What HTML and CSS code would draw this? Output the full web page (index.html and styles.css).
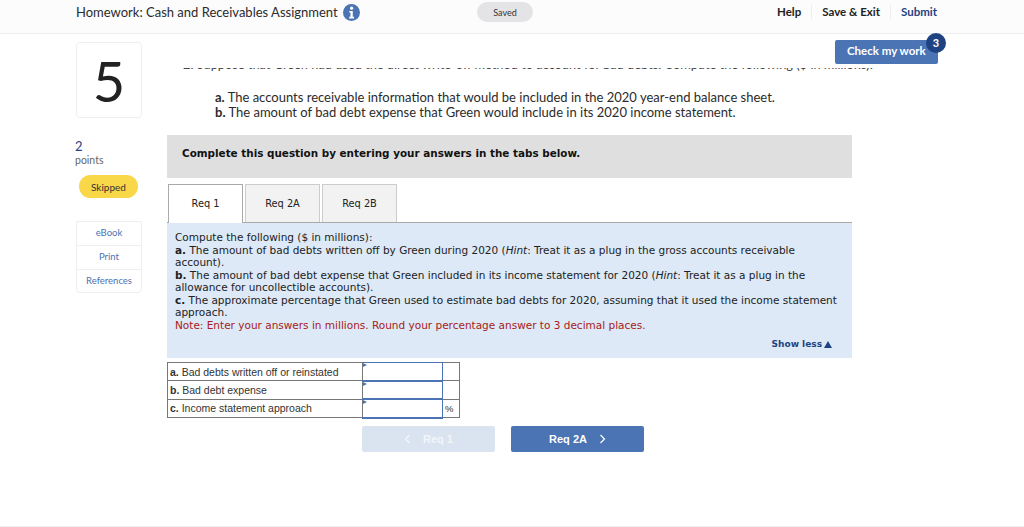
FILE: index.html
```html
<!DOCTYPE html>
<html lang="en">
<head>
<meta charset="utf-8">
<title>Homework: Cash and Receivables Assignment</title>
<link rel="stylesheet" href="styles.css">
</head>
<body>
<header class="topbar">
  <div class="topbar-title">
    <span class="title-text">Homework: Cash and Receivables Assignment</span>
    <svg class="info-icon" viewBox="0 0 16 16" width="17" height="17" aria-hidden="true">
      <circle cx="8" cy="8" r="8" fill="#4a74b4"/>
      <circle cx="8.1" cy="3.9" r="1.5" fill="#fff"/>
      <path d="M5.9 6.5h3.3v5.6h1.2v1.5H5.8v-1.5h1.2V8H5.9z" fill="#fff"/>
    </svg>
  </div>
  <div class="saved-pill">Saved</div>
  <nav class="topnav">
    <span class="nav-item">Help</span>
    <span class="nav-item">Save &amp; Exit</span>
    <span class="nav-item nav-submit">Submit</span>
  </nav>
</header>

<div class="check-wrap">
  <span class="check-btn">Check my work</span>
  <span class="check-badge">3</span>
</div>

<main class="layout">
  <aside class="side">
    <div class="qnum">5</div>
    <div class="pts-num">2</div>
    <div class="pts-label">points</div>
    <div class="skipped">Skipped</div>
    <ul class="side-links">
      <li>eBook</li>
      <li>Print</li>
      <li>References</li>
    </ul>
  </aside>

  <section class="content">
    <div class="clip"><p class="clip-line">2. Suppose that Green had used the direct write-off method to account for bad debts. Compute the following ($ in millions):</p></div>
    <ol class="parts">
      <li><b>a.</b> The accounts receivable information that would be included in the 2020 year-end balance sheet.</li>
      <li><b>b.</b> The amount of bad debt expense that Green would include in its 2020 income statement.</li>
    </ol>
    <div class="instruction">Complete this question by entering your answers in the tabs below.</div>
    <div class="tabs">
      <div class="tab tab-active">Req 1</div>
      <div class="tab">Req 2A</div>
      <div class="tab">Req 2B</div>
    </div>
    <div class="panel">
      <div>Compute the following ($ in millions):</div>
      <div><b>a.</b> The amount of bad debts written off by Green during 2020 (<i>Hint</i>: Treat it as a plug in the gross accounts receivable account).</div>
      <div><b>b.</b> The amount of bad debt expense that Green included in its income statement for 2020 (<i>Hint</i>: Treat it as a plug in the allowance for uncollectible accounts).</div>
      <div><b>c.</b> The approximate percentage that Green used to estimate bad debts for 2020, assuming that it used the income statement approach.</div>
      <div class="note">Note: Enter your answers in millions. Round your percentage answer to 3 decimal places.</div>
      <div class="show-less">Show less<svg class="tri" viewBox="0 0 8 7" width="8" height="7" aria-hidden="true"><path d="M4 0l4 7H0z" fill="#1f4382"/></svg></div>
    </div>
    <table class="answers">
      <tr><td class="lbl"><b>a.</b> Bad debts written off or reinstated</td><td class="inp"></td><td class="unit"></td></tr>
      <tr><td class="lbl"><b>b.</b> Bad debt expense</td><td class="inp"></td><td class="unit"></td></tr>
      <tr><td class="lbl"><b>c.</b> Income statement approach</td><td class="inp"></td><td class="unit">%</td></tr>
    </table>
    <div class="pager">
      <div class="pg-btn pg-prev"><svg class="chev" viewBox="0 0 7 10" width="7" height="10" aria-hidden="true"><path d="M5.5 1L1.5 5l4 4" fill="none" stroke="#f2f5f9" stroke-width="1.2"/></svg>Req 1</div>
      <div class="pg-btn pg-next">Req 2A<svg class="chev chev-r" viewBox="0 0 7 10" width="7" height="10" aria-hidden="true"><path d="M1.5 1l4 4-4 4" fill="none" stroke="#fff" stroke-width="1.2"/></svg></div>
    </div>
  </section>
</main>
<div class="bottom-line"></div>
</body>
</html>
```
FILE: styles.css
```css
* { box-sizing: border-box; }
html, body { margin: 0; padding: 0; }
body {
  width: 1024px;
  height: 527px;
  overflow: hidden;
  position: relative;
  background: #fff;
  font-family: "DejaVu Sans", Verdana, sans-serif;
  color: #222;
}
.topbar {
  height: 34px;
  background: #fcfcfc;
  border-bottom: 1px solid #ececec;
  display: flex;
  align-items: center;
  padding: 0 87px 9px 76px;
  font-family: Lato, "Noto Sans", sans-serif;
}
.topbar-title { display: flex; align-items: center; gap: 5px; width: 400px; }
.title-text { font-size: 13px; color: #2b2b2b; white-space: nowrap; }
.info-icon { flex: none; }
.saved-pill {
  width: 56px;
  height: 20px;
  border-radius: 10px;
  background: #e4e4e6;
  font-size: 9px;
  color: #333;
  display: flex;
  align-items: center;
  justify-content: center;
  margin-left: 1px;
}
.topnav { margin-left: auto; display: flex; align-items: center; }
.nav-item {
  font-size: 11.5px;
  font-weight: 700;
  color: #222;
  padding: 0 10px;
  border-right: 1px solid #eee;
  line-height: 16px;
}
.nav-submit { color: #1f4382; border-right: 0; padding-right: 0; }
.check-wrap { position: absolute; left: 835px; top: 40px; width: 103px; height: 24px; z-index: 2; }
.check-btn {
  display: flex;
  width: 103px;
  height: 24px;
  align-items: center;
  padding: 0 0 3px 12px;
  background: #4a74b4;
  border-radius: 2px;
  color: #fff;
  font: 700 11.5px Lato, "Noto Sans", sans-serif;
}
.check-badge {
  position: absolute;
  left: 91px;
  top: -7px;
  width: 20px;
  height: 20px;
  border-radius: 50%;
  background: #1f4382;
  color: #fff;
  font: 700 11px/19px Lato, "Noto Sans", sans-serif;
  text-align: center;
}
.layout { display: flex; padding-left: 75px; gap: 25px; }
.side { width: 67px; flex: none; font-family: Lato, "Noto Sans", sans-serif; padding-top: 8px; }
.qnum {
  width: 66px;
  height: 76px;
  margin-left: 1px;
  border: 1px solid #eee;
  border-radius: 4px;
  display: flex;
  align-items: center;
  justify-content: center;
  font-size: 56px;
  color: #222;
}
.pts-num { margin-top: 20px; font-size: 13px; line-height: 16px; color: #1f4382; }
.pts-label { font-size: 10.5px; line-height: 13px; color: #666; }
.skipped {
  width: 59px;
  height: 23px;
  margin: 8px 0 0 4px;
  border-radius: 12px;
  background: #f8d748;
  font-size: 10px;
  color: #333;
  display: flex;
  align-items: center;
  justify-content: center;
}
.side-links {
  list-style: none;
  margin: 23px 0 0 1px;
  padding: 0;
  width: 66px;
  border: 1px solid #eee;
  border-radius: 0 0 4px 4px;
  font-size: 9.5px;
  color: #4a74b4;
  text-align: center;
}
.side-links li { height: 24px; line-height: 22px; border-bottom: 1px solid #eee; }
.side-links li:last-child { height: 22px; border-bottom: 0; }
.content { width: 685px; flex: none; }
.clip { height: 4px; width: 720px; margin-top: 34px; overflow: hidden; padding-left: 16px; font-family: Lato, "Noto Sans", sans-serif; }
.clip-line { margin: -12px 0 0; font-size: 12.8px; line-height: 16px; white-space: nowrap; color: #444; }
.parts { list-style: none; margin: 18px 0 0; padding: 0 0 0 48px; font: 13px/15px Lato, "Noto Sans", sans-serif; color: #2b2b2b; }
.instruction {
  height: 43px;
  margin-top: 15px;
  background: #dfdfdf;
  padding: 11px 0 0 15px;
  font-size: 10.4px;
  font-weight: 700;
  line-height: 14px;
  color: #111;
}
.tabs { display: flex; gap: 2px; padding-left: 1px; margin-top: 6px; border-bottom: 1px solid #aaa; height: 39px; }
.tab {
  width: 75px;
  height: 38px;
  background: #f2f2f2;
  border: 1px solid #ccc;
  border-bottom: 0;
  font-size: 9.8px;
  line-height: 37px;
  text-align: center;
  color: #222;
}
.tab-active { background: #fff; border-color: #aaa; height: 39px; }
.panel {
  background: #dde9f7;
  height: 135px;
  padding: 8px 8px 0;
  font-size: 10.5px;
  line-height: 12.5px;
  color: #222;
}
.note { color: #a82020; }
.show-less {
  margin-top: 7px;
  display: flex;
  justify-content: flex-end;
  align-items: center;
  gap: 2px;
  padding-right: 12px;
  font: 700 9px/13px "DejaVu Sans", sans-serif;
  color: #1f4382;
}
.answers {
  border-collapse: collapse;
  margin-top: 4px;
  width: 293px;
  font: 10.5px "Liberation Sans", Arial, sans-serif;
  color: #333;
}
.answers td { border: 1px solid #777; height: 18.4px; padding: 0 0 0 2px; }
.lbl { width: 196px; }
.inp { width: 80px; position: relative; border: 1px solid #4a74b4 !important; border-width: 1px 1px 2px 1px !important; }
.inp::before {
  content: "";
  position: absolute;
  left: 0;
  top: 0;
  border-left: 4px solid #4a74b4;
  border-top: 2.5px solid transparent;
  border-bottom: 2.5px solid transparent;
}
.unit { width: 17px; font-size: 9.5px; }
.pager { display: flex; gap: 16px; margin-top: 7px; margin-left: 195px; font: 700 11px "Liberation Sans", Arial, sans-serif; }
.pg-btn {
  width: 133px;
  height: 26px;
  border-radius: 2px;
  display: flex;
  align-items: center;
  justify-content: center;
  color: #fff;
}
.pg-prev { background: #dae4f0; color: #f2f5f9; }
.pg-next { background: #4a74b4; }
.chev { margin-right: 12px; }
.chev-r { margin: 0 0 0 12px; }
.bottom-line { position: absolute; left: 0; right: 0; bottom: 0; height: 1px; background: #f0f0f0; }
```
